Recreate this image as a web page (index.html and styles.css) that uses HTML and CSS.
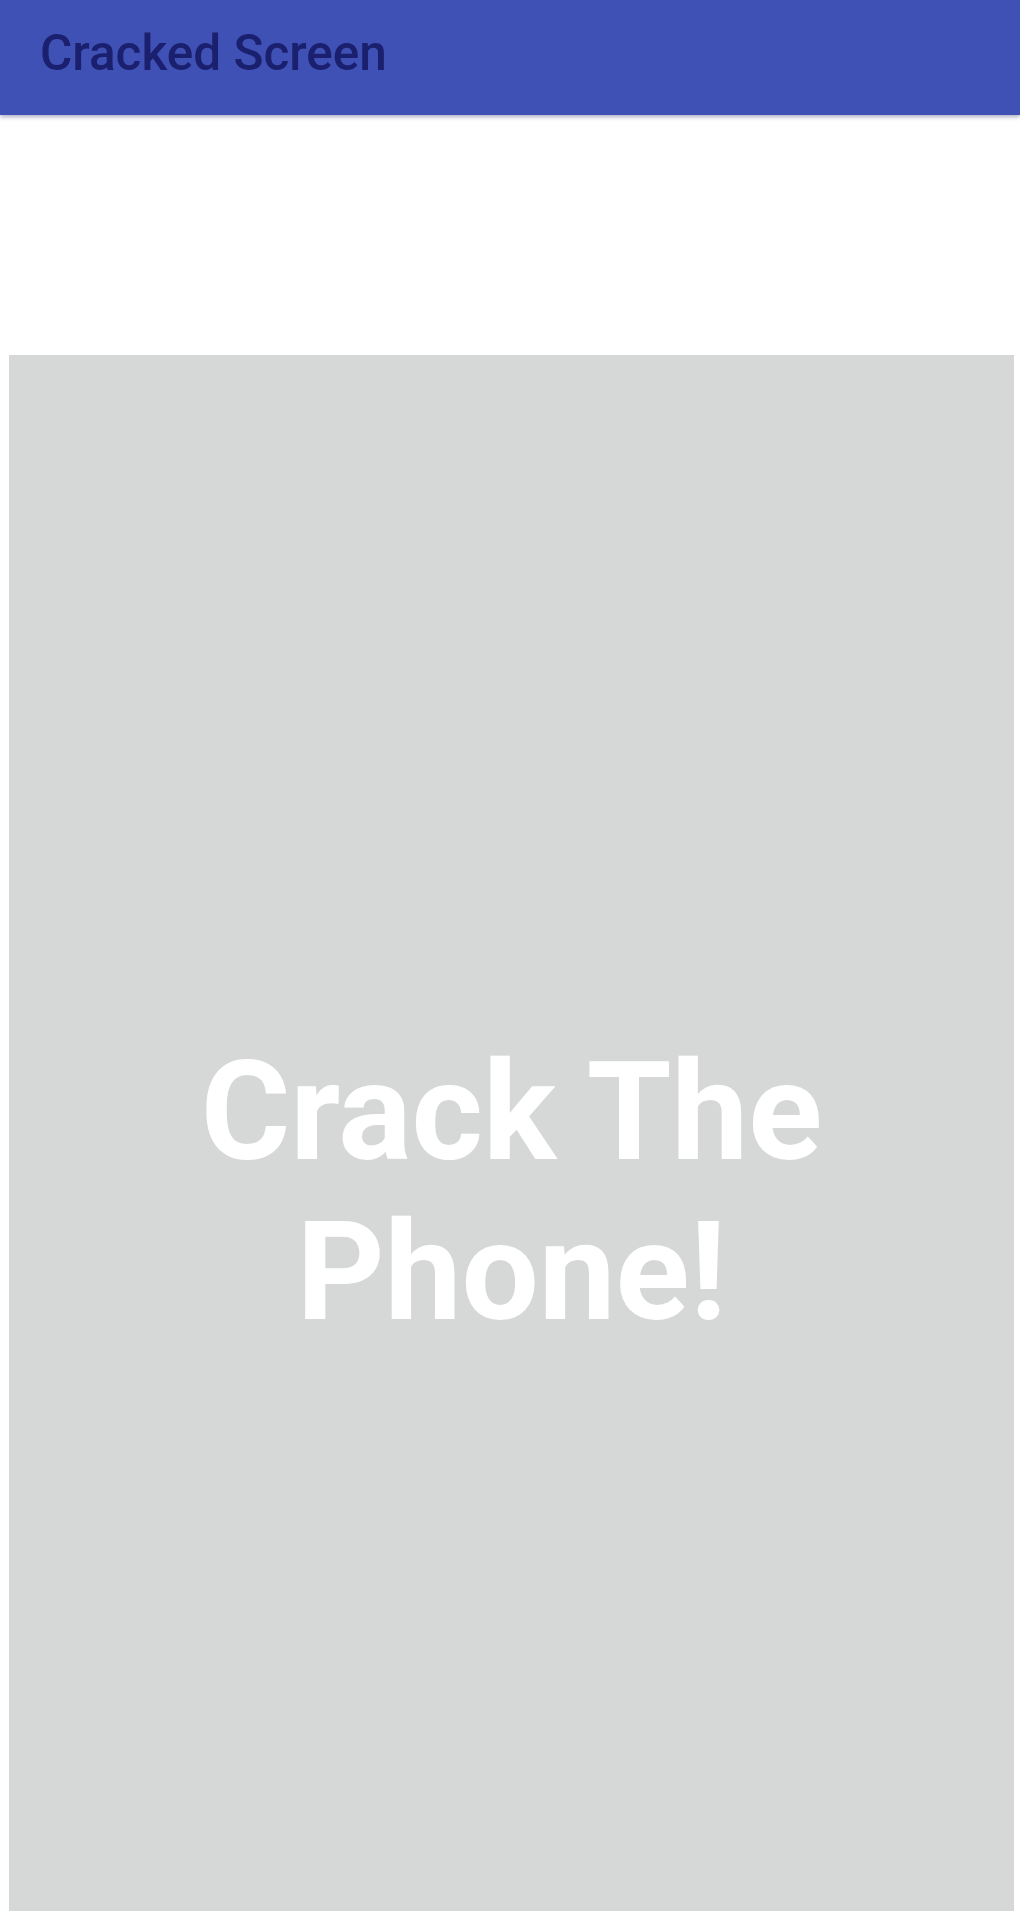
FILE: index.html
```html
<!DOCTYPE html>
<html lang="en">
<head>
<meta charset="utf-8">
<title>Cracked Screen</title>
<link rel="stylesheet" href="styles.css">
</head>
<body>
  <header class="app-bar">
    <h1 class="app-title">Cracked Screen</h1>
  </header>
  <main class="content">
    <section class="crack-area">
      <p class="crack-label">Crack The<br>Phone!</p>
    </section>
  </main>
</body>
</html>
```
FILE: styles.css
```css
html, body {
  margin: 0;
  padding: 0;
  background: #ffffff;
  font-family: Roboto, "Liberation Sans", Arial, sans-serif;
  overflow: hidden;
}

.app-bar {
  height: 115px;
  background: #3f51b5;
  display: flex;
  align-items: center;
  padding-left: 40px;
  box-shadow: 0 2px 4px rgba(20, 30, 90, 0.35);
  position: relative;
  z-index: 1;
}

.app-title {
  margin: 0;
  margin-top: -10px;
  font-size: 49.5px;
  font-weight: 500;
  color: #1a1f6e;
}

.content {
  padding: 240px 6px 0 9px;
}

.crack-area {
  height: 1556px;
  background: #d6d8d7;
  display: flex;
  flex-direction: column;
  align-items: center;
  padding-top: 677px;
  box-sizing: border-box;
}

.crack-label {
  margin: 0;
  font-size: 137px;
  font-weight: 700;
  color: #ffffff;
  text-align: center;
  line-height: 160px;
}
```
